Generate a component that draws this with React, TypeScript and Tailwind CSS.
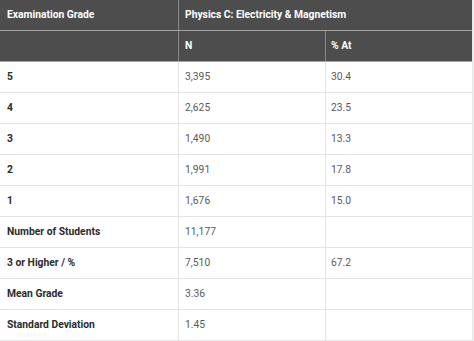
import React from 'react';

const rows = [
  { label: '5', n: '3,395', pct: '30.4' },
  { label: '4', n: '2,625', pct: '23.5' },
  { label: '3', n: '1,490', pct: '13.3' },
  { label: '2', n: '1,991', pct: '17.8' },
  { label: '1', n: '1,676', pct: '15.0' },
  { label: 'Number of Students', n: '11,177', pct: '' },
  { label: '3 or Higher / %', n: '7,510', pct: '67.2' },
  { label: 'Mean Grade', n: '3.36', pct: '' },
  { label: 'Standard Deviation', n: '1.45', pct: '' },
];

export default function App() {
  return (
    <div className="w-[474px] h-[341px] bg-[#f4f4f4] overflow-hidden" style={{ fontFamily: 'Roboto, "Liberation Sans", sans-serif' }}>
      <div className="w-[473px] bg-white border-r border-[#e6e6e6] text-[10.3px]">
        {/* Header */}
        <div className="flex h-[31px] bg-[#4d4d4d] border-b border-[#a3a3a3] text-white font-bold">
          <div className="w-[179px] flex items-center pl-[7px] border-r border-[#8a8a8a]">Examination Grade</div>
          <div className="flex-1 flex items-center pl-[6px]">Physics C: Electricity &amp; Magnetism</div>
        </div>
        <div className="flex h-[31px] bg-[#4d4d4d] border-b border-[#a3a3a3] text-white font-bold">
          <div className="w-[179px] border-r border-[#8a8a8a]"></div>
          <div className="w-[147px] flex items-center pl-[6px] border-r border-[#8a8a8a]">N</div>
          <div className="flex-1 flex items-center pl-[5px]">% At</div>
        </div>

        {/* Body */}
        {rows.map((r) => (
          <div key={r.label} className="flex h-[31px] border-b border-[#e4e4e4]">
            <div className="w-[179px] flex items-center pl-[7px] border-r border-[#e4e4e4] font-bold text-[#2b2b2b]">{r.label}</div>
            <div className="w-[147px] flex items-center pl-[6px] border-r border-[#e4e4e4] text-[#5a5a5a]">{r.n}</div>
            <div className="flex-1 flex items-center pl-[5px] text-[#5a5a5a]">{r.pct}</div>
          </div>
        ))}
      </div>
    </div>
  );
}
